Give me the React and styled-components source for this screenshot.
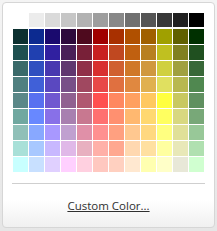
import React from 'react'
import styled, { createGlobalStyle } from 'styled-components'

const grays = ['#ffffff', '#ececec', '#dadada', '#c6c6c6', '#b2b2b2', '#9e9e9e', '#888888', '#707070', '#555555', '#383838', '#202020', '#000000']

// one array per row, 12 columns each (darkest row first)
const rows = [
    ['#0c3030', '#0c2a90', '#1a0a6e', '#2e0a3c', '#4e0a1e', '#a00000', '#a83000', '#b05000', '#a06000', '#a0a000', '#606000', '#003000'],
    ['#1e5050', '#2040b0', '#3020a0', '#4a2058', '#782038', '#c82020', '#c04820', '#c06010', '#b88020', '#c0c020', '#808020', '#205020'],
    ['#3a6a6a', '#3050c0', '#4838b0', '#603870', '#903048', '#d83030', '#d06030', '#d07828', '#d09840', '#d0d040', '#a0a040', '#386838'],
    ['#508080', '#4060d8', '#5a48c0', '#785088', '#a04860', '#e84848', '#e07040', '#e08840', '#e0b050', '#e0e060', '#b8b850', '#508850'],
    ['#5a8888', '#5870f0', '#7058d0', '#906090', '#b05870', '#ff5050', '#ff8860', '#ffa060', '#ffc860', '#ffff40', '#c8c860', '#609060'],
    ['#70a8a0', '#6888ff', '#8870e8', '#a880b0', '#c87890', '#ff7070', '#ff9070', '#ffb870', '#ffd870', '#ffff60', '#d8d880', '#78a878'],
    ['#90c0b8', '#88a8ff', '#a898ff', '#c0a0d0', '#e090a8', '#ff9090', '#ffa080', '#ffc890', '#ffd880', '#ffff80', '#e0e098', '#98c898'],
    ['#a8e0d8', '#a8c8ff', '#c8b8ff', '#e0b8e8', '#e8b0c0', '#ffb0a8', '#ffa890', '#ffd8b0', '#ffe0a0', '#ffffa0', '#e8e8b8', '#b0e0b0'],
    ['#c8ffff', '#c8e0ff', '#e0d0ff', '#ffd0ff', '#ffd0e0', '#ffc8c0', '#ffd0c0', '#ffe8d0', '#ffffb0', '#ffffc8', '#e8e8d8', '#d0ffd0'],
]

const GlobalStyle = createGlobalStyle`
    body{
        margin: 0;
        background: #ededed;
        font-family: "Open Sans", "Liberation Sans", sans-serif;
    }
`

function App() {
    return (
        <>
            <GlobalStyle />
            <FrameStyled>
                <Panel>
                    <GrayRow>
                        {grays.map((c) => <Swatch key={c} $color={c} $h={14} />)}
                    </GrayRow>
                    <ColorGrid>
                        {rows.flat().map((c, i) => <Swatch key={i} $color={c} $h={15} />)}
                    </ColorGrid>
                    <Divider />
                    <CustomLink>Custom Color...</CustomLink>
                </Panel>
            </FrameStyled>
        </>
    )
}

const FrameStyled = styled.div`
    width: 217px;
    height: 231px;
    box-sizing: border-box;
    padding: 2px 2px 3px 2px;
    background: linear-gradient(#f4f4f4, #e6e6e6);
`

const Panel = styled.div`
    height: 100%;
    box-sizing: border-box;
    border: 1px solid #d6d6d6;
    border-radius: 4px;
    background: linear-gradient(#ffffff 0%, #ffffff 88%, #f0f0f0 100%);
    padding: 10px 10px 0 10px;
    display: flex;
    flex-direction: column;
`

const GrayRow = styled.div`
    display: grid;
    grid-template-columns: repeat(12, 15px);
    column-gap: 1px;
    margin-bottom: 2px;
`

const ColorGrid = styled.div`
    display: grid;
    grid-template-columns: repeat(12, 15px);
    gap: 1px;
`

const Swatch = styled.div`
    height: ${(p) => p.$h}px;
    background: ${(p) => p.$color};
`

const Divider = styled.div`
    height: 1px;
    background: #cfcfcf;
    margin: 11px -1px 0 -1px;
`

const CustomLink = styled.div`
    margin-top: 15px;
    text-align: center;
    font-size: 11.5px;
    color: #303030;
    text-decoration: underline;
    line-height: 14px;
`

export default App
